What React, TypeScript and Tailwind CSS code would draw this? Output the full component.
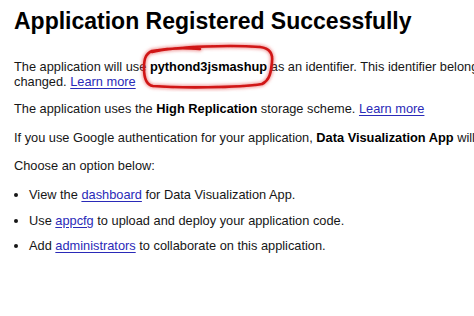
import React from "react";

const A = ({ children }: { children: React.ReactNode }) => (
  <a href="#" className="text-[#2a2ab8] underline underline-offset-2">
    {children}
  </a>
);

const LOOP =
  "M14 10 C40 4, 95 3, 122 5 C132 6, 135 12, 134 20 C133 30, 132 38, 124 42 C100 46, 40 46, 15 44 C8 43, 6 36, 6 26 C6 18, 7 12, 14 9 C30 6, 50 6, 62 7";

export default function App() {
  return (
    <div className="relative w-[474px] h-[316px] overflow-hidden bg-white text-[#161616] font-['Liberation_Sans',Arial,sans-serif]">
      <div className="w-[800px] whitespace-nowrap pl-[14px] pt-[8px]">
        <h1 className="text-[23px] font-bold leading-[1.15] text-black">
          Application Registered Successfully
        </h1>
        <p className="mt-[25px] text-[12.8px] leading-[15px]">
          The application will use <b className="text-black">pythond3jsmashup</b> as an identifier. This identifier belongs to your application and cannot be
          <br />
          changed. <A>Learn more</A>
        </p>
        <p className="mt-[12px] text-[12.8px] leading-[15px]">
          The application uses the <b className="text-black">High Replication</b> storage scheme. <A>Learn more</A>
        </p>
        <p className="mt-[14px] text-[12.8px] leading-[15px]">
          If you use Google authentication for your application, <b className="text-black">Data Visualization App</b> will be displayed on sign in pages when a user accesses your application.
        </p>
        <p className="mt-[13px] text-[12.8px] leading-[15px]">Choose an option below:</p>
        <ul className="mt-[14px] text-[12.8px] leading-[15px] list-disc pl-[15px] flex flex-col gap-[10.5px]">
          <li>
            View the <A>dashboard</A> for Data Visualization App.
          </li>
          <li>
            Use <A>appcfg</A> to upload and deploy your application code.
          </li>
          <li>
            Add <A>administrators</A> to collaborate on this application.
          </li>
        </ul>
      </div>
      <svg
        className="absolute left-[138px] top-[42px] pointer-events-none"
        width="140"
        height="50"
        viewBox="0 0 140 50"
      >
        <defs>
          <filter id="halo" x="-10%" y="-20%" width="120%" height="140%">
            <feGaussianBlur stdDeviation="1.6" />
          </filter>
          <filter id="blur" x="-10%" y="-20%" width="120%" height="140%">
            <feGaussianBlur stdDeviation="0.5" />
          </filter>
        </defs>
        <path
          d={LOOP}
          fill="none"
          stroke="#e85a5a"
          strokeOpacity="0.55"
          strokeWidth="5"
          strokeLinecap="round"
          filter="url(#halo)"
        />
        <path
          d={LOOP}
          fill="none"
          stroke="#d01414"
          strokeWidth="2.6"
          strokeLinecap="round"
          filter="url(#blur)"
        />
      </svg>
    </div>
  );
}
